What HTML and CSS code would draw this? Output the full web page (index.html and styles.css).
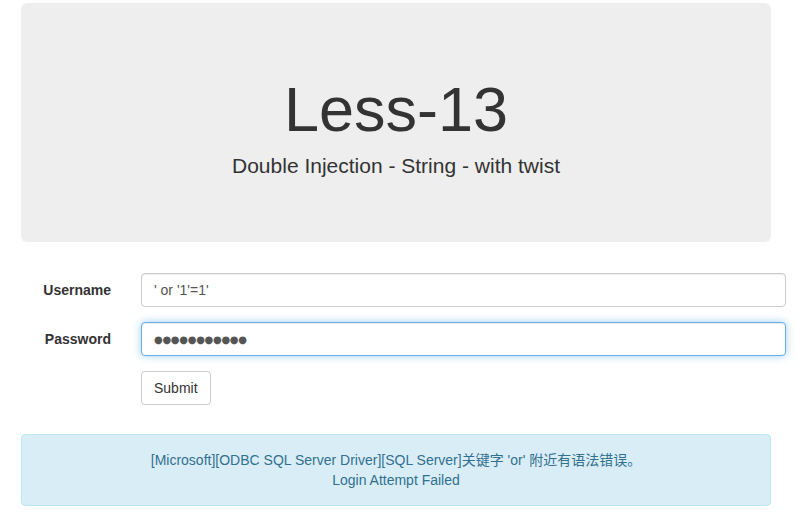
FILE: index.html
```html
<!DOCTYPE html>
<html>
<head>
<meta charset="utf-8">
<link rel="stylesheet" href="styles.css">
</head>
<body>
<div class="page">
  <div class="jumbotron">
    <h1 class="title">Less-13</h1>
    <p class="lead">Double Injection - String - with twist</p>
  </div>
  <form class="form">
    <div class="row">
      <label class="label">Username</label>
      <input class="input" type="text" value="' or '1'=1'">
    </div>
    <div class="row">
      <label class="label">Password</label>
      <input class="input focus" type="text" value="●●●●●●●●●●●">
    </div>
    <div class="row">
      <span class="label"></span>
      <button class="btn" type="button">Submit</button>
    </div>
  </form>
  <div class="alert">
    <div>[Microsoft][ODBC SQL Server Driver][SQL Server]关键字 'or' 附近有语法错误。</div>
    <div>Login Attempt Failed</div>
  </div>
</div>
</body>
</html>
```
FILE: styles.css
```css
* { box-sizing: border-box; }
html, body { margin: 0; padding: 0; background: #fff; }
body {
  font-family: "Liberation Sans", Arial, "Noto Sans CJK SC", sans-serif;
  font-size: 14px;
  line-height: 20px;
  color: #333;
}
.page {
  padding: 3px 0 0 21px;
}
.jumbotron {
  width: 750px;
  height: 239px;
  background: #eee;
  border-radius: 6px;
  text-align: center;
  padding-top: 71px;
}
.title {
  margin: 0;
  font-weight: 400;
  font-size: 63px;
  line-height: 70px;
  color: #333;
}
.lead {
  margin: 7px 0 0;
  font-size: 21px;
  line-height: 30px;
  color: #333;
}
.form {
  margin-top: 31px;
  display: flex;
  flex-direction: column;
  gap: 15px;
}
.row {
  display: flex;
  align-items: center;
}
.label {
  width: 120px;
  padding-right: 30px;
  text-align: right;
  font-weight: 700;
  flex: none;
}
.input {
  width: 645px;
  height: 34px;
  padding: 6px 12px;
  font-family: "Liberation Sans", Arial, sans-serif;
  font-size: 14px;
  color: #555;
  background: #fff;
  border: 1px solid #ccc;
  border-radius: 4px;
  box-shadow: inset 0 1px 1px rgba(0,0,0,.075);
  outline: none;
}
.input.focus {
  border-color: #66afe9;
  box-shadow: inset 0 1px 1px rgba(0,0,0,.075), 0 0 8px rgba(102,175,233,.6);
  font-family: "DejaVu Sans", sans-serif;
  font-size: 10px;
  letter-spacing: -0.3px;
}
.btn {
  height: 34px;
  padding: 6px 12px;
  font-family: "Liberation Sans", Arial, sans-serif;
  font-size: 14px;
  line-height: 20px;
  color: #333;
  background: #fff;
  border: 1px solid #ccc;
  border-radius: 4px;
}
.alert {
  margin-top: 29px;
  width: 750px;
  padding: 15px;
  background: #d9edf7;
  border: 1px solid #bce8f1;
  border-radius: 4px;
  color: #31708f;
  text-align: center;
}
```
